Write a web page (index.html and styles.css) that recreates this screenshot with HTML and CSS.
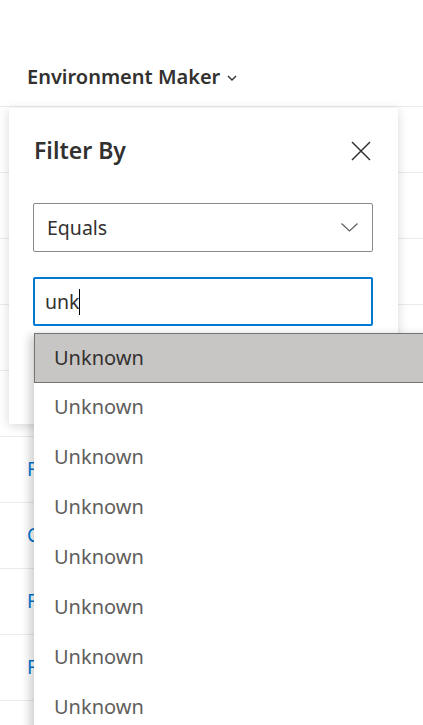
FILE: index.html
```html
<!DOCTYPE html>
<html lang="en">
<head>
    <meta charset="UTF-8">
    <meta name="viewport" content="width=device-width, initial-scale=1.0">
    <title>Environment Maker filter</title>
    <link rel="stylesheet" href="styles.css">
</head>
<body>
    <div class="page">
        <div class="col-header">
            <span class="col-title">Environment Maker</span>
            <svg class="col-chevron" width="10" height="6" viewBox="0 0 10 6">
                <path d="M1 1 L5 5 L9 1" fill="none" stroke="#323130" stroke-width="1.4"/>
            </svg>
        </div>
        <div class="row"><a class="cell-link">Fabrikam</a></div>
        <div class="row"><a class="cell-link">Contoso</a></div>
        <div class="row"><a class="cell-link">Fourth Coffee</a></div>
        <div class="row"><a class="cell-link">Fabrikam</a></div>
        <div class="row"><a class="cell-link">Contoso</a></div>
        <div class="row"><a class="cell-link">Fabrikam</a></div>
        <div class="row"><a class="cell-link">Contoso</a></div>
        <div class="row"><a class="cell-link">Fabrikam</a></div>
        <div class="row"><a class="cell-link">Fabrikam</a></div>
        <div class="row"><a class="cell-link">Contoso</a></div>

        <!-- filter callout -->
        <div class="filter-panel">
            <div class="filter-head">
                <h2 class="filter-title">Filter By</h2>
                <svg class="close-btn" width="20" height="20" viewBox="0 0 20 20">
                    <path d="M1 1 L19 19 M19 1 L1 19" fill="none" stroke="#323130" stroke-width="1.5"/>
                </svg>
            </div>
            <div class="select-box">
                <span>Equals</span>
                <svg width="17" height="9" viewBox="0 0 17 9">
                    <path d="M0.5 0.5 L8.5 8 L16.5 0.5" fill="none" stroke="#605e5c" stroke-width="1.2"/>
                </svg>
            </div>
            <div class="text-box">unk<span class="caret"></span></div>
        </div>

        <!-- suggestions -->
        <ul class="suggest-list">
            <li class="suggest-item is-active">Unknown</li>
            <li class="suggest-item">Unknown</li>
            <li class="suggest-item">Unknown</li>
            <li class="suggest-item">Unknown</li>
            <li class="suggest-item">Unknown</li>
            <li class="suggest-item">Unknown</li>
            <li class="suggest-item">Unknown</li>
            <li class="suggest-item">Unknown</li>
        </ul>
    </div>
</body>
</html>
```

FILE: styles.css
```css
body {
    margin: 0;
    padding: 0;
    font-family: "Noto Sans", "Open Sans", sans-serif;
    color: #323130;
    background-color: #ffffff;
}
.page {
    position: relative;
    width: 423px;
    height: 725px;
    overflow: hidden;
}
.col-header {
    height: 107px;
    box-sizing: border-box;
    border-bottom: 1px solid #edebe9;
    padding: 62px 0 0 27px;
    display: flex;
    align-items: flex-start;
    gap: 7px;
}
.col-title {
    font-size: 20px;
    font-weight: 600;
    line-height: 30px;
}
.col-chevron {
    margin-top: 13px;
}
.row {
    height: 66px;
    box-sizing: border-box;
    border-bottom: 1px solid #edebe9;
    padding-left: 27px;
    line-height: 64px;
}
.cell-link {
    color: #0078d4;
    font-size: 19px;
}

/* filter callout */
.filter-panel {
    position: absolute;
    left: 9px;
    top: 108px;
    width: 389px;
    height: 316px;
    box-sizing: border-box;
    padding: 0 25px 0 24px;
    background: #ffffff;
    box-shadow: 0 2px 10px rgba(0, 0, 0, 0.16);
}
.filter-head {
    display: flex;
    justify-content: space-between;
    align-items: flex-start;
    height: 95px;
}
.filter-title {
    margin: 26px 0 0 1px;
    font-size: 23px;
    font-weight: 600;
    line-height: 32px;
}
.close-btn {
    margin: 33px 2px 0 0;
}
.select-box {
    height: 49px;
    box-sizing: border-box;
    border: 1px solid #8a8886;
    border-radius: 2px;
    display: flex;
    align-items: center;
    justify-content: space-between;
    padding: 0 14px 0 13px;
    font-size: 19.5px;
}
.text-box {
    margin-top: 25px;
    height: 49px;
    box-sizing: border-box;
    border: 2px solid #0078d4;
    border-radius: 2px;
    padding-left: 10px;
    display: flex;
    align-items: center;
    font-size: 19.5px;
}
.caret {
    display: inline-block;
    width: 1px;
    height: 26px;
    background: #000000;
    margin-left: -1px;
}

/* suggestions */
.suggest-list {
    position: absolute;
    left: 34px;
    top: 333px;
    width: 400px;
    margin: 0;
    padding: 0;
    list-style: none;
    background: #ffffff;
    box-shadow: -4px 2px 9px rgba(0, 0, 0, 0.2);
}
.suggest-item {
    height: 50px;
    box-sizing: border-box;
    padding-left: 20px;
    line-height: 48px;
    font-size: 20px;
    color: #605e5c;
}
.suggest-item.is-active {
    background: #c8c6c4;
    border: 1px solid #75736f;
    padding-left: 19px;
    color: #323130;
}
```
